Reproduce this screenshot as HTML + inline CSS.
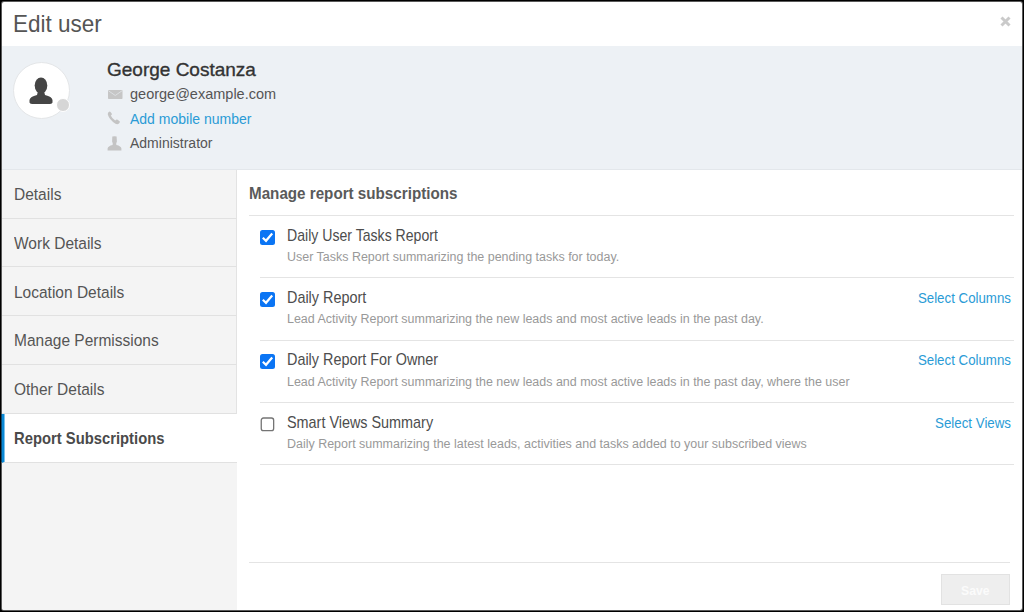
<!DOCTYPE html>
<html><head><meta charset="utf-8">
<style>
html,body{margin:0;padding:0;width:1024px;height:612px;overflow:hidden;background:#000;}
*{box-sizing:border-box;}
body{font-family:"Liberation Sans",sans-serif;}
#modal{position:absolute;left:2px;top:2px;width:1020px;height:608px;background:#fff;border-radius:2px;overflow:hidden;}
.t{position:absolute;white-space:nowrap;line-height:1;transform-origin:0 85%;}
#profile{position:absolute;left:0;top:44px;width:1020px;height:124px;background:#edf1f5;border-bottom:1px solid #e3e7eb;}
#side{position:absolute;left:0;top:168px;width:235px;height:440px;background:#f4f4f4;}
.item{position:absolute;left:0;width:235px;border-bottom:1px solid #e1e1e1;border-right:1px solid #e3e3e3;}
.item.active{background:#fff;width:235px;border-right:0;border-left:2px solid #0a88d4;box-shadow:inset 1px 0 0 #7cc2ec;}
.sep{position:absolute;height:1px;background:#e4e4e4;}
.cb{position:absolute;width:15px;height:15px;}
.link{color:#2a9bd6;}
.sy{transform-origin:0 85%;}
</style></head>
<body>
<div style="position:absolute;left:1px;top:1px;width:1022px;height:610px;background:#5a5a5a;border-radius:3px;"></div>
<div style="position:absolute;left:1px;top:414px;width:1px;height:48px;background:#0b4a72;"></div>
<div id="modal">
  <div class="t" id="title" style="left:11px;top:11.6px;font-size:22.5px;color:#555;transform:scaleY(1.1);">Edit user</div>
  <svg style="position:absolute;left:998px;top:14px" width="11" height="11" viewBox="0 0 11 11"><path d="M1.5 1.5L9.5 9.5M9.5 1.5L1.5 9.5" stroke="#cacaca" stroke-width="3" stroke-linecap="butt"/></svg>

  <div id="profile">
    <div style="position:absolute;left:11px;top:16px;width:57px;height:57px;border-radius:50%;background:#fff;border:1px solid #e4e6e8;"></div>
    <svg style="position:absolute;left:26px;top:31px" width="26" height="28" viewBox="0 0 26 28">
      <ellipse cx="13" cy="8.5" rx="6.3" ry="8" fill="#454545"/>
      <path d="M10 14 L16 14 L17 18 Q24 19.5 24.5 23 L24.5 25.5 Q24 27 20 27 L6 27 Q2 27 1.5 25.5 L1.5 23 Q2 19.5 9 18 Z" fill="#454545"/>
    </svg>
    <div style="position:absolute;left:54px;top:52px;width:14px;height:14px;border-radius:50%;background:#d6d6d6;border:1.5px solid #fff;"></div>
    <div class="t" id="name" style="left:105px;top:13.5px;font-size:19px;color:#333;-webkit-text-stroke:0.35px #333;">George Costanza</div>
    <svg style="position:absolute;left:106px;top:44px" width="15" height="10" viewBox="0 0 15 10"><rect x="0" y="0" width="14.5" height="9" rx="0.8" fill="#c6c6c6"/><path d="M0.5 0.8 L7.25 5.5 L14 0.8" stroke="#dcdfe2" stroke-width="1" fill="none"/></svg>
    <div class="t" id="email" style="left:128px;top:41px;font-size:14.5px;color:#555;">george@example.com</div>
    <svg style="position:absolute;left:105.4px;top:65px" width="14" height="14" viewBox="0 0 14 14"><path d="M2.2 0.8 Q0.5 1.5 0.8 3.5 Q2.3 8.8 8.5 12.7 Q10.5 13.8 12 12.4 L12.8 11.3 Q13.1 10.6 12.3 10 L10.2 8.6 Q9.4 8.2 8.8 8.9 L8.2 9.5 Q5 7.5 3.8 4.6 L4.5 4 Q5.2 3.4 4.7 2.6 L3.5 0.9 Q3 0.3 2.2 0.8Z" fill="#c4c4c4"/></svg>
    <div class="t link" id="mobile" style="left:128px;top:66px;font-size:14px;">Add mobile number</div>
    <svg style="position:absolute;left:105px;top:90px" width="15" height="15" viewBox="0 0 15 15"><path d="M5.3 0.6 Q7.5 0 9.6 0.6 L9.9 5.5 L9.2 7.5 L9.4 9 Q14 10 14.4 12.5 L14.4 14.5 L0.6 14.5 L0.6 12.5 Q1 10 5.6 9 L5.8 7.5 L5.1 5.5Z" fill="#c4c4c4"/></svg>
    <div class="t" id="admin" style="left:128px;top:90px;font-size:14px;color:#555;">Administrator</div>
  </div>

  <div id="side">
    <div class="item" style="top:0;height:49px;"><div class="t" style="left:12px;top:17px;font-size:15.5px;color:#555;transform:scaleY(1.1);" >Details</div></div>
    <div class="item" style="top:49px;height:48px;"><div class="t" style="left:12px;top:17px;font-size:15.5px;color:#555;transform:scaleY(1.1);" >Work Details</div></div>
    <div class="item" style="top:97px;height:49px;"><div class="t" style="left:12px;top:18px;font-size:15.5px;color:#555;transform:scaleY(1.1);" >Location Details</div></div>
    <div class="item" style="top:146px;height:49px;"><div class="t" style="left:12px;top:17px;font-size:15.5px;color:#555;transform:scaleY(1.1);" >Manage Permissions</div></div>
    <div class="item" style="top:195px;height:49px;"><div class="t" style="left:12px;top:17px;font-size:15.5px;color:#555;transform:scaleY(1.1);" >Other Details</div></div>
    <div class="item active" style="top:244px;height:49px;"><div class="t" style="left:10px;top:18px;font-size:14.8px;font-weight:bold;color:#4a4a4a;transform:scaleY(1.07);">Report Subscriptions</div></div>
  </div>

  <div id="content">
    <div class="t" id="heading" style="left:247px;top:184px;font-size:15.2px;font-weight:bold;color:#5a5a5a;transform:scaleY(1.03);">Manage report subscriptions</div>
    <div class="sep" style="left:247px;top:213px;width:765px;"></div>

    <svg class="cb" style="left:258px;top:227.5px" viewBox="0 0 15 15"><rect x="0" y="0" width="15" height="15" rx="2.5" fill="#0b75f4"/><path d="M2.8 7.8 L6 10.8 L12.2 3.5" stroke="#fff" stroke-width="2.2" fill="none"/></svg>
    <div class="t" style="left:285px;top:227px;font-size:14.1px;color:#4d4d4d;transform:scaleY(1.12);">Daily User Tasks Report</div>
    <div class="t" style="left:285px;top:249px;font-size:12.47px;color:#999;">User Tasks Report summarizing the pending tasks for today.</div>
    <div class="sep" style="left:258px;top:275px;width:754px;"></div>

    <svg class="cb" style="left:258px;top:290px" viewBox="0 0 15 15"><rect x="0" y="0" width="15" height="15" rx="2.5" fill="#0b75f4"/><path d="M2.8 7.8 L6 10.8 L12.2 3.5" stroke="#fff" stroke-width="2.2" fill="none"/></svg>
    <div class="t" style="left:285px;top:289px;font-size:14.4px;color:#4d4d4d;transform:scaleY(1.12);">Daily Report</div>
    <div class="t" style="left:285px;top:311px;font-size:12.47px;color:#999;">Lead Activity Report summarizing the new leads and most active leads in the past day.</div>
    <div class="t link" style="right:11px;top:290px;font-size:13.3px;transform:scaleY(1.1);">Select Columns</div>
    <div class="sep" style="left:258px;top:338px;width:754px;"></div>

    <svg class="cb" style="left:258px;top:352px" viewBox="0 0 15 15"><rect x="0" y="0" width="15" height="15" rx="2.5" fill="#0b75f4"/><path d="M2.8 7.8 L6 10.8 L12.2 3.5" stroke="#fff" stroke-width="2.2" fill="none"/></svg>
    <div class="t" style="left:285px;top:351px;font-size:14.4px;color:#4d4d4d;transform:scaleY(1.12);">Daily Report For Owner</div>
    <div class="t" style="left:285px;top:374px;font-size:12.47px;color:#999;">Lead Activity Report summarizing the new leads and most active leads in the past day, where the user</div>
    <div class="t link" style="right:11px;top:352px;font-size:13.3px;transform:scaleY(1.1);">Select Columns</div>
    <div class="sep" style="left:258px;top:400px;width:754px;"></div>

    <svg class="cb" style="left:258px;top:415px" viewBox="0 0 15 15"><rect x="1.25" y="1.0" width="12.4" height="12.6" rx="2.2" fill="#fff" stroke="#747474" stroke-width="1.3"/></svg>
    <div class="t" style="left:285px;top:414px;font-size:14.4px;color:#4d4d4d;transform:scaleY(1.12);">Smart Views Summary</div>
    <div class="t" style="left:285px;top:436px;font-size:12.47px;color:#999;">Daily Report summarizing the latest leads, activities and tasks added to your subscribed views</div>
    <div class="t link" style="right:11px;top:415px;font-size:13.3px;transform:scaleY(1.1);">Select Views</div>
    <div class="sep" style="left:258px;top:462px;width:754px;"></div>

    <div class="sep" style="left:247px;top:560px;width:761px;"></div>
    <div style="position:absolute;left:939px;top:572px;width:69px;height:31px;background:#eeeeee;border:1px solid #e2e2e2;"></div>
    <div class="t" style="left:959px;top:583px;font-size:12.2px;font-weight:bold;color:#fbfbfb;">Save</div>
  </div>
</div>
</body></html>
